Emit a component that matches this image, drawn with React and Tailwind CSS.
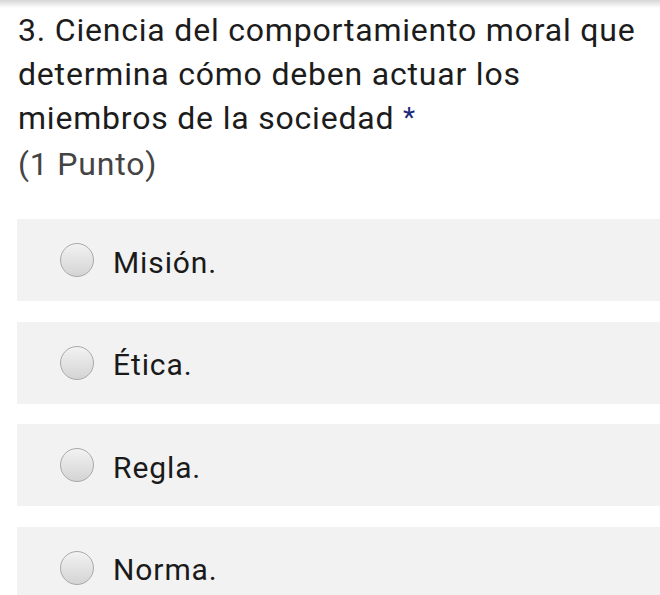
import React from 'react';

const options = ['Misión.', 'Ética.', 'Regla.', 'Norma.'];

const Radio = () => (
  <span className="w-[34px] h-[34px] rounded-full border border-[#a9a9a9] bg-gradient-to-b from-[#f2f2f2] to-[#d4d4d4] shrink-0" />
);

export default function App() {
  return (
    <div className="w-[660px] h-[595px] overflow-hidden bg-white relative" style={{ fontFamily: 'Roboto, "Noto Sans", sans-serif' }}>
      <div className="absolute top-0 left-0 right-0 h-[8px] bg-gradient-to-b from-[#d6d6d6] to-white" />
      <div className="pl-[18px] pt-[8px] text-[32px] leading-[44px] tracking-[0.8px] text-[#1c1c1c]">
        <p>3. Ciencia del comportamiento moral que</p>
        <p>determina cómo deben actuar los</p>
        <p>
          miembros de la sociedad <span className="text-[#1a2a7a] text-[28px] relative -top-[2px]">*</span>
        </p>
        <p className="text-[#444]">(1 Punto)</p>
      </div>
      <div className="mt-[33px] ml-[17px] flex flex-col gap-[20.5px]">
        {options.map((o) => (
          <div key={o} className="h-[82px] bg-[#f2f2f2] flex items-center pl-[43px] gap-[19px] w-[660px]">
            <Radio />
            <span className="text-[30px] tracking-[0.9px] text-[#1a1a1a] relative top-[2px]">{o}</span>
          </div>
        ))}
      </div>
    </div>
  );
}
